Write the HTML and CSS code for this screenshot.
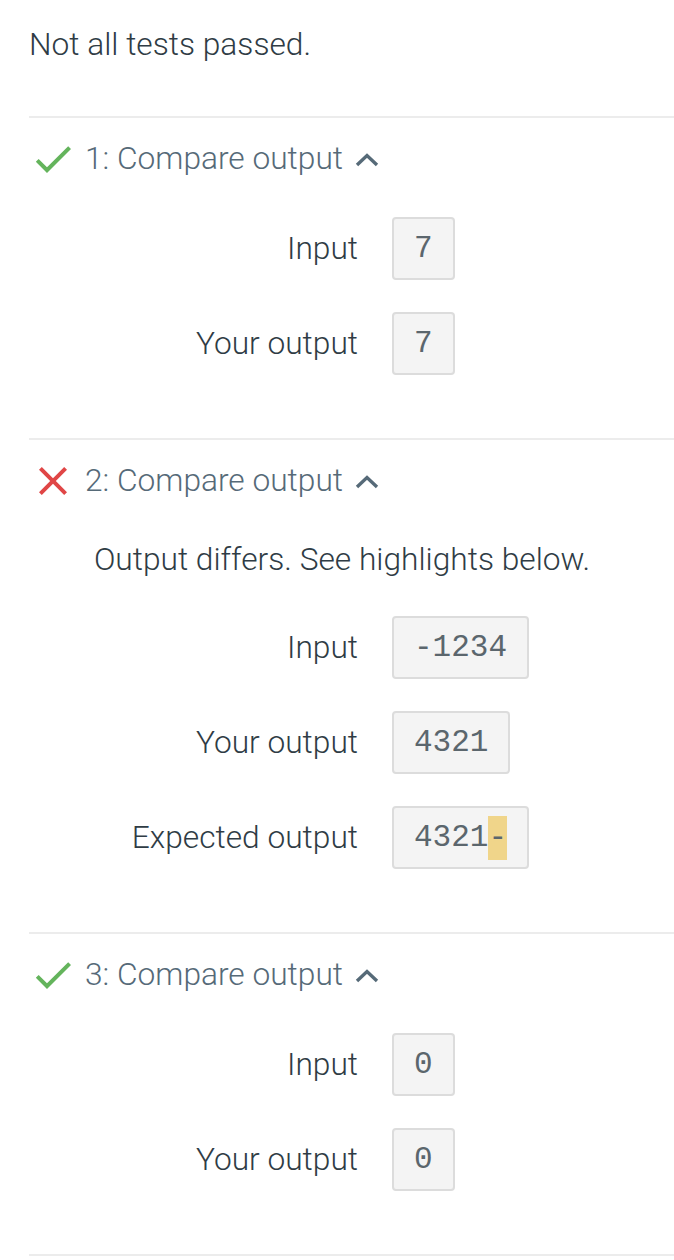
FILE: index.html
```html
<!DOCTYPE html>
<html lang="en">
<head>
<meta charset="utf-8">
<title>Test results</title>
<link rel="stylesheet" href="styles.css">
</head>
<body>
<div class="results">
  <p class="summary">Not all tests passed.</p>

  <section class="test">
    <div class="test-header">
      <svg class="status-icon pass" viewBox="0 0 24 24" width="48" height="48"><path d="M9 16.17L4.83 12l-1.42 1.41L9 19 21 7l-1.41-1.41z"/></svg>
      <span class="test-title">1: Compare output</span>
      <svg class="chevron" viewBox="0 0 26 16" width="26" height="16"><polyline points="3,13 13,3.5 23,13"/></svg>
    </div>
    <div class="rows">
      <div class="label">Input</div>
      <div class="value"><pre class="code">7</pre></div>
      <div class="label">Your output</div>
      <div class="value"><pre class="code">7</pre></div>
    </div>
  </section>

  <section class="test">
    <div class="test-header">
      <svg class="status-icon fail" viewBox="0 0 24 24" width="48" height="48"><path d="M19 6.41L17.59 5 12 10.59 6.41 5 5 6.41 10.59 12 5 17.59 6.41 19 12 13.41 17.59 19 19 17.59 13.41 12z"/></svg>
      <span class="test-title">2: Compare output</span>
      <svg class="chevron" viewBox="0 0 26 16" width="26" height="16"><polyline points="3,13 13,3.5 23,13"/></svg>
    </div>
    <p class="message">Output differs. See highlights below.</p>
    <div class="rows after-message">
      <div class="label">Input</div>
      <div class="value"><pre class="code">-1234</pre></div>
      <div class="label">Your output</div>
      <div class="value"><pre class="code">4321</pre></div>
      <div class="label">Expected output</div>
      <div class="value"><pre class="code">4321<span class="diff">-</span></pre></div>
    </div>
  </section>

  <section class="test">
    <div class="test-header">
      <svg class="status-icon pass" viewBox="0 0 24 24" width="48" height="48"><path d="M9 16.17L4.83 12l-1.42 1.41L9 19 21 7l-1.41-1.41z"/></svg>
      <span class="test-title">3: Compare output</span>
      <svg class="chevron" viewBox="0 0 26 16" width="26" height="16"><polyline points="3,13 13,3.5 23,13"/></svg>
    </div>
    <div class="rows">
      <div class="label">Input</div>
      <div class="value"><pre class="code">0</pre></div>
      <div class="label">Your output</div>
      <div class="value"><pre class="code">0</pre></div>
    </div>
  </section>
  <div class="end-rule"></div>
</div>
</body>
</html>
```

FILE: styles.css
```css
html, body {
  margin: 0;
  padding: 0;
  background: #ffffff;
}

body {
  font-family: Roboto, "Liberation Sans", sans-serif;
  font-weight: 300;
  font-size: 31.7px;
  color: #2f3c45;
}

.results {
  padding-left: 29px;
}

.summary {
  margin: 0;
  padding-top: 27px;
  line-height: 36px;
  height: 116px;
  box-sizing: border-box;
}

.test {
  border-top: 2px solid #ececec;
  padding-top: 23px;
  padding-bottom: 63px;
}

.test-header {
  display: flex;
  align-items: center;
  height: 36px;
  color: #566a78;
}

.status-icon {
  flex: none;
  margin-right: 8px;
}

.status-icon.pass {
  fill: #64b45c;
}

.status-icon.fail {
  fill: #e04646;
}

.test-title {
  line-height: 36px;
}

.chevron {
  flex: none;
  margin-left: 11px;
  margin-top: 1px;
}

.chevron polyline {
  fill: none;
  stroke: #566a78;
  stroke-width: 3.4;
  stroke-linecap: butt;
  stroke-linejoin: miter;
}

.message {
  margin: 43px 0 0;
  width: 626px;
  text-align: center;
  line-height: 36px;
}

.rows {
  display: grid;
  grid-template-columns: 329px auto;
  column-gap: 34px;
  row-gap: 32px;
  align-items: center;
  margin-top: 40px;
}

.rows.after-message {
  margin-top: 38px;
}

.label {
  text-align: right;
  line-height: 36px;
}

.value {
  justify-self: start;
}

.code {
  margin: 0;
  display: block;
  font-family: "Liberation Mono", "Courier New", monospace;
  font-weight: 400;
  font-size: 31px;
  line-height: 44px;
  color: #5b666d;
  background: #f4f4f4;
  border: 2px solid #dcdcdc;
  border-radius: 4px;
  padding: 8px 20px 7px;
}

.diff {
  display: inline-block;
  vertical-align: top;
  line-height: 44px;
  height: 44px;
  background: #f0d58a;
}

.end-rule {
  border-top: 2px solid #ececec;
}
```
